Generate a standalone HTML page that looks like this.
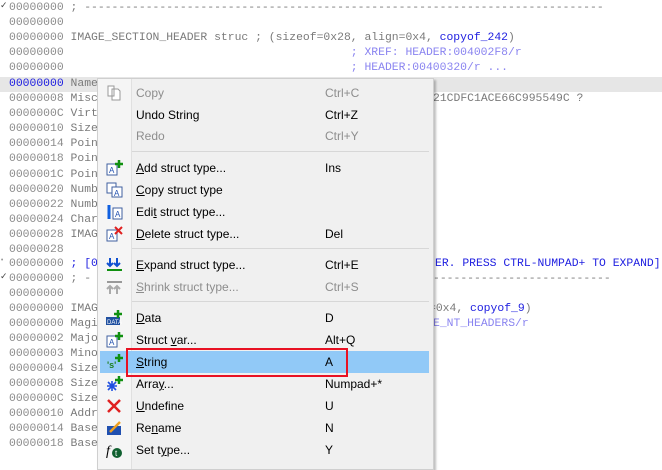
<!DOCTYPE html>
<html><head><meta charset="utf-8"><style>
body{margin:0;width:662px;height:459px;overflow:hidden;background:#fff;position:relative;font-family:"Liberation Mono",monospace}
.l{position:absolute;left:9px;font-size:11.4px;line-height:15px;height:15px;white-space:pre;color:#7a7a7a}
.a{color:#8c8c8c}
.b{color:#2020e0}
.p{color:#8a84f0}
.f{position:absolute;font-size:11.4px;line-height:15px;white-space:pre}
#hl{position:absolute;left:0;top:77px;width:662px;height:15px;background:#e6e6e6}
#menu{position:absolute;left:97px;top:78px;width:335px;height:390px;background:#f0f0f0;border:1px solid #cfcfcf;box-shadow:2px 2px 2px rgba(0,0,0,.25);font-family:"Liberation Sans",sans-serif;font-size:12px}
#ic{position:absolute;left:0;top:0;width:33px;height:100%;background:#f5f5f5;border-right:1px solid #e0e0e0}
.it{position:absolute;left:0;width:335px;height:22px;line-height:22px;color:#000}
.it .t{position:absolute;left:38px}
.it .k{position:absolute;left:227px}
.it.d{color:#8d8d8d}
.it svg{position:absolute;left:8px;top:3px}
.sep{position:absolute;left:34px;width:297px;height:1px;background:#d7d7d7}
u{text-decoration:underline}
</style></head><body>
<div id="hl"></div>
<div style="position:absolute;left:0;top:1px;font-size:9px;color:#444">✓</div>
<div style="position:absolute;left:0;top:272px;font-size:9px;color:#444">✓</div>
<div style="position:absolute;left:0;top:257px;font-size:7px;color:#999">•</div>
<div class="l" style="top:1px"><span class="a">00000000</span> ; ----------------------------------------------------------------------------</div>
<div class="l" style="top:16px"><span class="a">00000000</span></div>
<div class="l" style="top:31px"><span class="a">00000000</span> IMAGE_SECTION_HEADER struc ; (sizeof=0x28, align=0x4, <span class="b">copyof_242</span>)</div>
<div class="l" style="top:46px"><span class="a">00000000</span>                                          <span class="p">; XREF: HEADER:004002F8/r</span></div>
<div class="l" style="top:61px"><span class="a">00000000</span>                                          <span class="p">; HEADER:00400320/r ...</span></div>
<div class="l" style="top:77px"><span class="b">00000000</span> Name</div>
<div class="l" style="top:92px"><span class="a">00000008</span> Misc</div>
<div class="f" style="left:433px;top:92px;color:#7a7a7a">21CDFC1ACE66C995549C ?</div>
<div class="l" style="top:107px"><span class="a">0000000C</span> Virt</div>
<div class="l" style="top:122px"><span class="a">00000010</span> Size</div>
<div class="l" style="top:137px"><span class="a">00000014</span> Poin</div>
<div class="l" style="top:152px"><span class="a">00000018</span> Poin</div>
<div class="l" style="top:168px"><span class="a">0000001C</span> Poin</div>
<div class="l" style="top:183px"><span class="a">00000020</span> Numb</div>
<div class="l" style="top:198px"><span class="a">00000022</span> Numb</div>
<div class="l" style="top:213px"><span class="a">00000024</span> Char</div>
<div class="l" style="top:228px"><span class="a">00000028</span> IMAG</div>
<div class="l" style="top:243px"><span class="a">00000028</span></div>
<div class="l" style="top:257px"><span class="a">00000000</span> <span class="b">; [0</span></div>
<div class="f b" style="left:435px;top:257px">ER. PRESS CTRL-NUMPAD+ TO EXPAND]</div>
<div class="l" style="top:272px"><span class="a">00000000</span> ; -</div>
<div class="f" style="left:433px;top:272px;color:#7a7a7a">--------------------------</div>
<div class="l" style="top:287px"><span class="a">00000000</span></div>
<div class="l" style="top:302px"><span class="a">00000000</span> IMAG</div>
<div class="f" style="left:429px;top:302px;color:#7a7a7a">=0x4, <span class="b">copyof_9</span>)</div>
<div class="f p" style="left:433px;top:317px">E_NT_HEADERS/r</div>
<div class="l" style="top:317px"><span class="a">00000000</span> Magi</div>
<div class="l" style="top:332px"><span class="a">00000002</span> Majo</div>
<div class="l" style="top:347px"><span class="a">00000003</span> Mino</div>
<div class="l" style="top:362px"><span class="a">00000004</span> Size</div>
<div class="l" style="top:377px"><span class="a">00000008</span> Size</div>
<div class="l" style="top:392px"><span class="a">0000000C</span> Size</div>
<div class="l" style="top:407px"><span class="a">00000010</span> Addr</div>
<div class="l" style="top:422px"><span class="a">00000014</span> Base</div>
<div class="l" style="top:437px"><span class="a">00000018</span> Base</div>

<div id="menu">
<div id="ic"></div>
<div style="position:absolute;left:2px;top:272px;width:329px;height:22px;background:#91c9f7"></div>
<div style="position:absolute;left:28px;top:269px;width:218px;height:25px;border:2px solid #e81123"></div>

<div class="it d" style="top:3px"><svg width="16" height="16"><path d="M2 1h6v10H2z M6 4h6l2 2v9H6z" fill="#fff" stroke="#999"/></svg><span class="t">Copy</span><span class="k">Ctrl+C</span></div>
<div class="it" style="top:25px"><span class="t">Undo String</span><span class="k">Ctrl+Z</span></div>
<div class="it d" style="top:46px"><span class="t">Redo</span><span class="k">Ctrl+Y</span></div>
<div class="sep" style="top:72px"></div>
<div class="it" style="top:78px"><svg width="18" height="16"><rect x="1" y="4" width="10" height="11" fill="#fff" stroke="#4060a0"/><text x="3" y="13" font-size="8" fill="#2050b0">A</text><path d="M13 0v8M9 4h8" stroke="#109010" stroke-width="2.5"/></svg><span class="t"><u>A</u>dd struct type...</span><span class="k">Ins</span></div>
<div class="it" style="top:100px"><svg width="18" height="16"><rect x="1" y="1" width="9" height="10" fill="#fff" stroke="#4060a0"/><rect x="6" y="5" width="10" height="10" fill="#fff" stroke="#4060a0"/><text x="8" y="14" font-size="8" fill="#2050b0">A</text></svg><span class="t"><u>C</u>opy struct type</span></div>
<div class="it" style="top:122px"><svg width="18" height="16"><path d="M3 1v14" stroke="#1060e0" stroke-width="3"/><rect x="7" y="4" width="9" height="11" fill="#fff" stroke="#4060a0"/><text x="9" y="13" font-size="8" fill="#2050b0">A</text></svg><span class="t">Edi<u>t</u> struct type...</span></div>
<div class="it" style="top:144px"><svg width="18" height="16"><rect x="1" y="4" width="10" height="11" fill="#fff" stroke="#4060a0"/><text x="3" y="13" font-size="8" fill="#2050b0">A</text><path d="M9 1l7 7M16 1l-7 7" stroke="#e02020" stroke-width="2"/></svg><span class="t"><u>D</u>elete struct type...</span><span class="k">Del</span></div>
<div class="sep" style="top:169px"></div>
<div class="it" style="top:175px"><svg width="18" height="16"><path d="M4 1v8M1 6l3 3 3-3M11 1v8M8 6l3 3 3-3" stroke="#1050d0" stroke-width="2" fill="none"/><path d="M1 13h15" stroke="#109010" stroke-width="2"/></svg><span class="t"><u>E</u>xpand struct type...</span><span class="k">Ctrl+E</span></div>
<div class="it d" style="top:197px"><svg width="18" height="16"><path d="M1 3h15" stroke="#999" stroke-width="2"/><path d="M4 15V7M1 10l3-3 3 3M11 15V7M8 10l3-3 3 3" stroke="#aaa" stroke-width="2" fill="none"/></svg><span class="t"><u>S</u>hrink struct type...</span><span class="k">Ctrl+S</span></div>
<div class="sep" style="top:222px"></div>
<div class="it" style="top:228px"><svg width="18" height="16"><rect x="0" y="7" width="14" height="8" fill="#2050a0"/><text x="1" y="14" font-size="6" fill="#fff">DATA</text><path d="M12 0v8M8 4h8" stroke="#109010" stroke-width="2.5"/></svg><span class="t"><u>D</u>ata</span><span class="k">D</span></div>
<div class="it" style="top:250px"><svg width="18" height="16"><rect x="1" y="4" width="10" height="11" fill="#fff" stroke="#4060a0"/><text x="3" y="13" font-size="8" fill="#2050b0">A</text><path d="M13 0v8M9 4h8" stroke="#109010" stroke-width="2.5"/></svg><span class="t">Struct <u>v</u>ar...</span><span class="k">Alt+Q</span></div>
<div class="it" style="top:272px"><svg width="18" height="16"><text x="1" y="14" font-size="9" font-weight="bold" fill="#208020">'s'</text><path d="M13 0v8M9 4h8" stroke="#109010" stroke-width="2.5"/></svg><span class="t"><u>S</u>tring</span><span class="k">A</span></div>
<div class="it" style="top:294px"><svg width="18" height="16"><path d="M6 5v10M1 10h10M2 6l8 8M10 6l-8 8" stroke="#2050e0" stroke-width="1.6"/><path d="M13 0v8M9 4h8" stroke="#109010" stroke-width="2.5"/></svg><span class="t">Arra<u>y</u>...</span><span class="k">Numpad+*</span></div>
<div class="it" style="top:316px"><svg width="18" height="16"><path d="M2 2l12 12M14 2L2 14" stroke="#e02020" stroke-width="2.5"/></svg><span class="t"><u>U</u>ndefine</span><span class="k">U</span></div>
<div class="it" style="top:338px"><svg width="18" height="16"><rect x="1" y="6" width="14" height="9" fill="#2050b0"/><path d="M4 12l10-10" stroke="#f0a020" stroke-width="2.5"/></svg><span class="t">Re<u>n</u>ame</span><span class="k">N</span></div>
<div class="it" style="top:360px"><svg width="18" height="16"><text x="0" y="13" font-size="14" font-style="italic" font-family="Liberation Serif" fill="#000">f</text><circle cx="11" cy="11" r="5" fill="#106030"/><text x="9" y="14" font-size="8" fill="#fff">t</text></svg><span class="t">Set t<u>y</u>pe...</span><span class="k">Y</span></div>
</div>
</body></html>
